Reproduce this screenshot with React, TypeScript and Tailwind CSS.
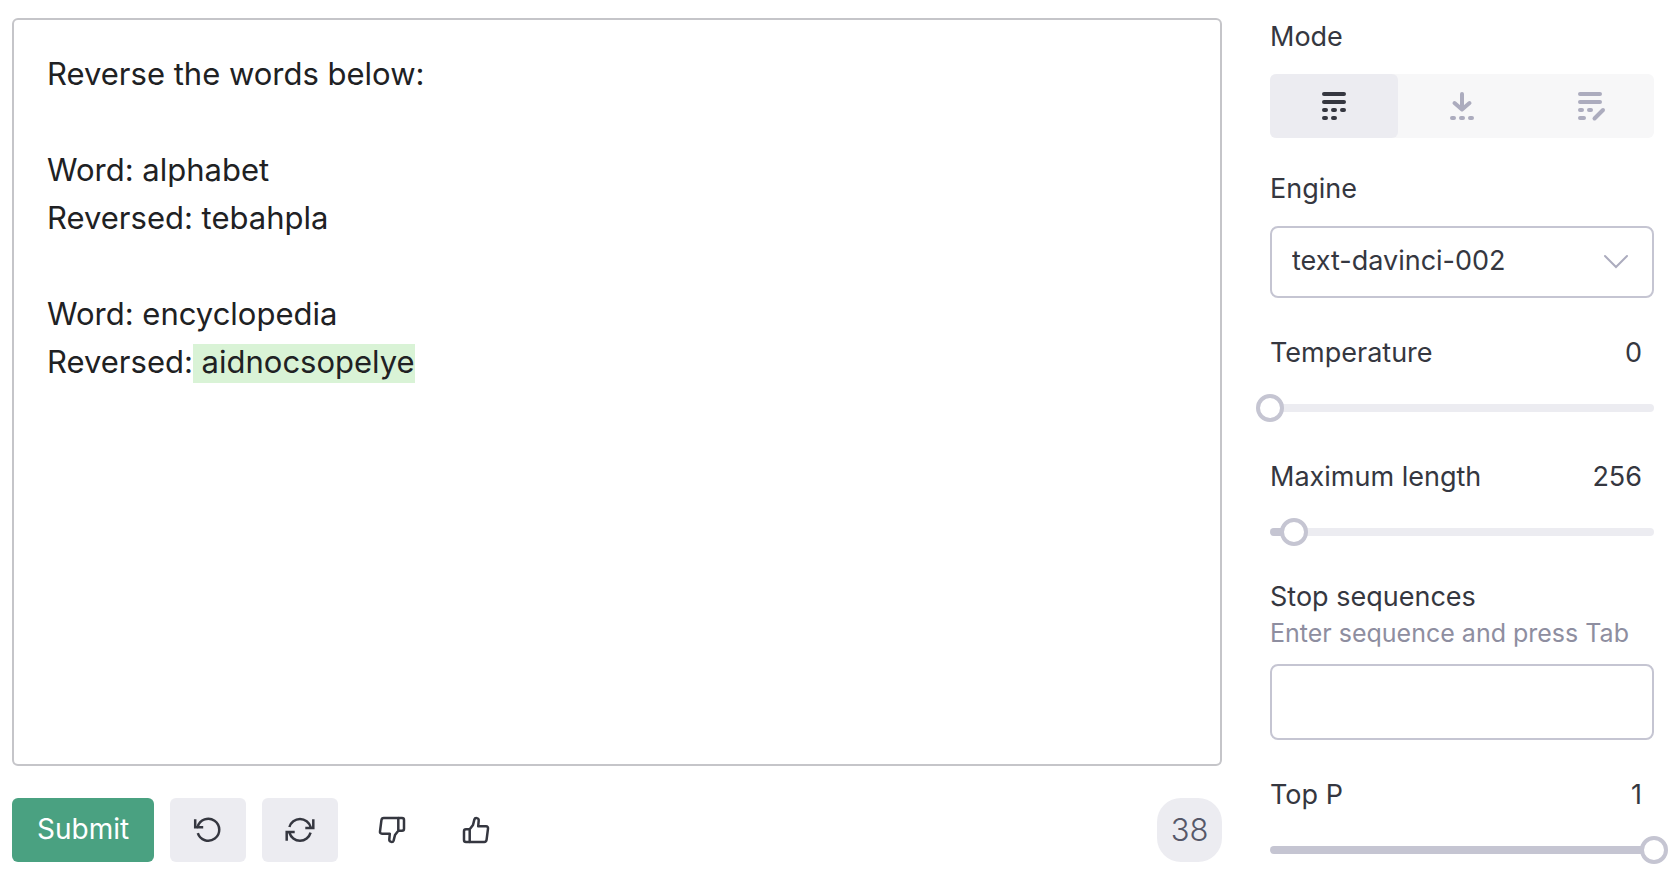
import React, { useLayoutEffect, useRef, useState } from "react";

const PROMPT = `Reverse the words below:

Word: alphabet
Reversed: tebahpla

Word: encyclopedia
Reversed:`;

const COMPLETION = " aidnocsopelye";

const LINE_HEIGHT = 48;
const PADDING_X = 33;
const PADDING_Y = 30;

const Icon = ({ children }: { children: React.ReactNode }) => (
  <svg
    width="32"
    height="32"
    viewBox="0 0 32 32"
    fill="none"
    stroke="currentColor"
    strokeWidth="2.500"
    aria-hidden="true"
  >
    {children}
  </svg>
);

const CompleteIcon = () => (
  <Icon>
    <g strokeWidth="4" strokeLinecap="round">
      <path d="M6 4h20M6 12h20" />
      <path d="M6 20h2M15 20h2M24 20h2M6 28h2M15 28h2" />
    </g>
  </Icon>
);

const InsertIcon = () => (
  <Icon>
    <g strokeWidth="4" strokeLinecap="round">
      <path d="M16 4v15M8.500 13l7.500 6.500 7.500-6.500" strokeLinejoin="round" />
      <path d="M6 28h2M15 28h2M24 28h2" />
    </g>
  </Icon>
);

const EditIcon = () => (
  <Icon>
    <g strokeWidth="4" strokeLinecap="round">
      <path d="M6 4h20M6 12h20" />
      <path d="M6 20h2M15 20h2M6 28h4" />
      <path d="M20.500 28.500l8.500-8.500" />
    </g>
  </Icon>
);

const UndoIcon = () => (
  <Icon>
    <path d="M3.200 5.300v8h8" />
    <path d="M4.500 13.300l1.200-.6A11 11 0 1 1 5.800 19.200" />
  </Icon>
);

const RefreshIcon = () => (
  <Icon>
    <path d="M5.400 13a11 11 0 0 1 21.200 0M29.300 5.300V14h-8" />
    <path d="M26.600 18.600a11 11 0 0 1-21.200 0M2.700 26.700V18h8" />
  </Icon>
);

const ThumbUpIcon = () => (
  <Icon>
    <g strokeLinejoin="round">
      <path d="M9.700 15.300L13 11l1.400-5.600C15 3.400 18.900 3.600 18.700 6.600l-.5 5.700H26c1.600 0 2.200.9 2 2.400l-1.400 11c-.2 1.600-.9 2.300-2.400 2.300H9.700z" />
      <path d="M9.700 15.300H6c-1.300 0-2 .7-2 2V26c0 1.300.7 2 2 2h3.700" />
    </g>
  </Icon>
);

type SliderProps = {
  id: string;
  label: string;
  min: number;
  max: number;
  step: number;
  initial: number;
};

const Slider = ({ id, label, min, max, step, initial }: SliderProps) => {
  const [value, setValue] = useState(initial);
  const percent = ((value - min) / (max - min)) * 100;

  return (
    <div className="flex flex-col gap-5">
      <div className="flex items-center justify-between pr-3 leading-[42px]">
        <label htmlFor={id}>{label}</label>
        <output htmlFor={id}>{value}</output>
      </div>
      <div className="relative flex h-7 items-center">
        <div className="h-2 w-full overflow-hidden rounded-full bg-[#ececf1]">
          <div className="h-full bg-[#c5c5d2]" style={{ width: `${percent}%` }}></div>
        </div>
        <input
          id={id}
          type="range"
          min={min}
          max={max}
          step={step}
          value={value}
          onChange={(e) => setValue(Number(e.target.value))}
          className="absolute inset-y-0 -left-3.5 h-7 w-[calc(100%+28px)] cursor-pointer appearance-none bg-transparent [&::-webkit-slider-thumb]:size-7 [&::-webkit-slider-thumb]:appearance-none [&::-webkit-slider-thumb]:rounded-full [&::-webkit-slider-thumb]:border-4 [&::-webkit-slider-thumb]:border-[#c5c5d2] [&::-webkit-slider-thumb]:bg-white"
        />
      </div>
    </div>
  );
};

const PromptEditor = () => {
  const ref = useRef<HTMLTextAreaElement>(null);
  const [text, setText] = useState(PROMPT + COMPLETION);
  const [mark, setMark] = useState({ left: 0, top: 0, width: 0 });
  const showMark = text === PROMPT + COMPLETION;

  // find where the completion sits on the last line
  useLayoutEffect(() => {
    const ctx = document.createElement("canvas").getContext("2d");
    if (!ctx || !ref.current) return;
    ctx.font = getComputedStyle(ref.current).font;
    const lines = PROMPT.split("\n");
    setMark({
      left: PADDING_X + ctx.measureText(lines[lines.length - 1]).width,
      top: PADDING_Y + (lines.length - 1) * LINE_HEIGHT + 6,
      width: ctx.measureText(COMPLETION).width,
    });
  }, []);

  return (
    <div className="relative flex flex-1 rounded-md border-2 border-[#c5c5c9]">
      {showMark && <div className="absolute h-[39px] bg-[#d9f3d6]" style={mark}></div>}
      <textarea
        ref={ref}
        aria-label="Prompt"
        spellCheck={false}
        value={text}
        onChange={(e) => setText(e.target.value)}
        className="relative w-full resize-none bg-transparent px-[33px] py-[30px] text-[31px] leading-[48px] text-[#202123] outline-none"
      />
    </div>
  );
};

const modes = [
  { name: "Complete", icon: <CompleteIcon /> },
  { name: "Insert", icon: <InsertIcon /> },
  { name: "Edit", icon: <EditIcon /> },
];

const App = () => {
  const [mode, setMode] = useState("Complete");

  return (
    <div className="flex min-h-screen gap-12 bg-white pt-4 pr-[26px] pb-5 pl-3 font-['Inter',sans-serif] text-[27px] text-[#353740]">
      <main className="flex min-w-0 flex-1 flex-col gap-8 py-0.5">
        <PromptEditor />
        <div className="flex items-center gap-4">
          <button className="h-16 rounded-md bg-[#4aa181] px-[25px] pb-0.5 text-[28px] text-white">
            Submit
          </button>
          <button
            aria-label="Undo"
            className="flex h-16 w-[76px] items-center justify-center rounded-md bg-[#ececf1]"
          >
            <UndoIcon />
          </button>
          <button
            aria-label="Regenerate"
            className="flex h-16 w-[76px] items-center justify-center rounded-md bg-[#ececf1]"
          >
            <RefreshIcon />
          </button>
          <div className="flex gap-2">
            <button aria-label="Bad response" className="flex h-16 w-[76px] items-center justify-center">
              <span className="rotate-180">
                <ThumbUpIcon />
              </span>
            </button>
            <button aria-label="Good response" className="flex h-16 w-[76px] items-center justify-center">
              <ThumbUpIcon />
            </button>
          </div>
          <span className="ml-auto flex h-16 w-[65px] items-center justify-center rounded-3xl bg-[#ececf1] text-[31px] font-light text-[#565869]">
            38
          </span>
        </div>
      </main>

      <aside className="flex w-96 shrink-0 flex-col">
        <h2 className="leading-[42px]">Mode</h2>
        <div className="mt-4 grid h-16 grid-cols-3 rounded-md bg-[#f7f7f8]">
          {modes.map((m) => (
            <button
              key={m.name}
              aria-label={m.name}
              aria-pressed={mode === m.name}
              onClick={() => setMode(m.name)}
              className={
                mode === m.name
                  ? "flex items-center justify-center rounded-md bg-[#ececf1] text-[#353740]"
                  : "flex items-center justify-center rounded-md text-[#acacbe]"
              }
            >
              {m.icon}
            </button>
          ))}
        </div>

        <label htmlFor="engine" className="mt-[30px] leading-[42px]">
          Engine
        </label>
        <div className="relative mt-4">
          <select
            id="engine"
            className="h-[72px] w-full appearance-none rounded-lg border-2 border-[#c5c5d2] bg-white px-5 pb-0.5"
          >
            <option>text-davinci-002</option>
          </select>
          <svg
            className="pointer-events-none absolute top-7 right-6 text-[#acacbe]"
            width="26"
            height="16"
            viewBox="0 0 26 16"
            fill="none"
            stroke="currentColor"
            strokeWidth="2"
            strokeLinecap="round"
            aria-hidden="true"
          >
            <path d="M1 2l11 11L23 2" />
          </svg>
        </div>

        <div className="mt-[34px] flex flex-col gap-[34px]">
          <Slider id="temperature" label="Temperature" min={0} max={1} step={0.01} initial={0} />
          <Slider id="max-length" label="Maximum length" min={1} max={4000} step={1} initial={256} />
        </div>

        <label htmlFor="stop" className="mt-[30px] leading-[42px]">
          Stop sequences
        </label>
        <p id="stop-hint" className="text-[25px] leading-[30px] text-[#8e8ea0]">
          Enter sequence and press Tab
        </p>
        <input
          id="stop"
          type="text"
          aria-describedby="stop-hint"
          className="mt-4 mb-[34px] h-[76px] rounded-lg border-2 border-[#c5c5d2] px-5"
        />

        <Slider id="top-p" label="Top P" min={0} max={1} step={0.01} initial={1} />
      </aside>
    </div>
  );
};

export default App;
